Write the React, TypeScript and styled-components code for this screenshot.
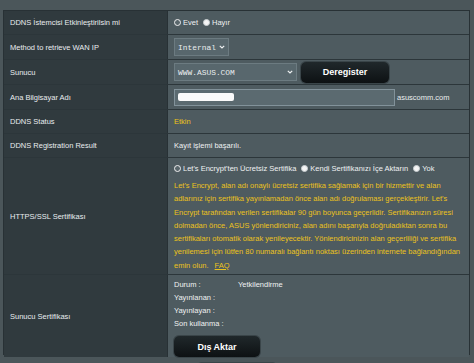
import React from "react";
import styled, { createGlobalStyle } from "styled-components";

const GlobalStyle = createGlobalStyle`
  html, body {
    margin: 0;
    padding: 0;
    overflow: hidden;
    background: #4b565a;
  }
  body {
    font-family: "Liberation Sans", Arial, sans-serif;
  }
`;

const Page = styled.div`
  padding: 10px 0 0 3px;
  width: 474px;
  height: 363px;
  box-sizing: border-box;
  overflow: hidden;
`;

const FormTable = styled.div`
  width: 467px;
  border: 1px solid #283135;
  box-sizing: border-box;
`;

const Row = styled.div<{ $h: number; $last?: boolean }>`
  display: grid;
  grid-template-columns: 164px 1fr;
  height: ${(p) => p.$h}px;
  box-sizing: border-box;
  border-bottom: ${(p) => (p.$last ? "none" : "1px solid #2c363a")};
`;

const Label = styled.div`
  background: #303a3e;
  border-right: 1px solid #283135;
  color: #e8ecee;
  font-size: 7.5px;
  display: flex;
  align-items: center;
  padding-left: 6px;
`;

const Value = styled.div<{ $top?: boolean }>`
  background: #4e5b60;
  color: #eef1f2;
  font-size: 7.5px;
  display: flex;
  flex-direction: ${(p) => (p.$top ? "column" : "row")};
  align-items: ${(p) => (p.$top ? "flex-start" : "center")};
  padding: ${(p) => (p.$top ? "4px 6px 0 6px" : "0 6px")};
  gap: 4px;
`;

const RadioGroup = styled.div`
  display: flex;
  align-items: center;
  gap: 5px;
  height: 13px;
`;

const RadioItem = styled.label`
  display: flex;
  align-items: center;
  gap: 2px;
  color: #eef1f2;
  font-size: 7.5px;
`;

const RadioDot = styled.span<{ $checked?: boolean }>`
  display: inline-block;
  width: 7px;
  height: 7px;
  border-radius: 50%;
  box-sizing: border-box;
  background: ${(p) => (p.$checked ? "#59666b" : "#f4f4f4")};
  border: ${(p) => (p.$checked ? "1.5px solid #f0f0f0" : "1px solid #c9cfd1")};
`;

const SelectBox = styled.div<{ $w: number }>`
  width: ${(p) => p.$w}px;
  height: 18px;
  box-sizing: border-box;
  background: #58676d;
  border: 1px solid #6c7b81;
  display: flex;
  align-items: center;
  gap: 2px;
  padding: 0 3px;
  font-family: "Liberation Mono", "Courier New", monospace;
  font-size: 7.9px;
  color: #e9edee;
  white-space: nowrap;

  svg {
    margin-left: auto;
    flex-shrink: 0;
  }
`;

const DarkButton = styled.button<{ $w: number }>`
  width: ${(p) => p.$w}px;
  height: 21px;
  border: none;
  border-radius: 5px;
  background: linear-gradient(#20282b, #0d1113);
  box-shadow: 0 0 0 1px #3a4549;
  color: #ffffff;
  font-family: "Liberation Sans", Arial, sans-serif;
  font-weight: bold;
  font-size: 9px;
  padding: 0;
  cursor: pointer;
`;

const TextInput = styled.div`
  width: 221px;
  height: 17px;
  box-sizing: border-box;
  background: #5b6a70;
  border: 1px solid #82929a;
  display: flex;
  align-items: center;
  padding-left: 3px;
`;

const Redacted = styled.span`
  display: inline-block;
  width: 56px;
  height: 8px;
  background: #fafafa;
  border-radius: 2px;
`;

const Suffix = styled.span`
  color: #e9edee;
  font-size: 7.5px;
  margin-left: -2px;
`;

const Yellow = styled.span`
  color: #efc31a;
`;

const Notice = styled.p`
  margin: 0;
  color: #ecc21c;
  font-size: 7.5px;
  line-height: 13.3px;
  white-space: nowrap;
`;

const FaqLink = styled.a`
  color: #ecc21c;
  text-decoration: underline;
  margin-left: 6px;
`;

const CertList = styled.div`
  display: grid;
  grid-template-columns: 64px 1fr;
  line-height: 13px;
  font-size: 7.5px;
  color: #eef1f2;
  margin-top: -1px;
`;

const ExportButton = styled(DarkButton)`
  margin-top: 2px;
`;

const Footer = styled.div`
  display: flex;
  justify-content: center;
  width: 467px;
  margin-top: 8px;
`;

const Chevron = () => (
  <svg width="6" height="4" viewBox="0 0 6 4">
    <path d="M0.8 0.8 L3 3 L5.2 0.8" fill="none" stroke="#eef1f2" strokeWidth="1.2" />
  </svg>
);

const Radio = ({ checked, children }: { checked?: boolean; children: React.ReactNode }) => (
  <RadioItem>
    <RadioDot $checked={checked} />
    {children}
  </RadioItem>
);

export default function App() {
  return (
    <>
      <GlobalStyle />
      <Page>
        <FormTable>
          <Row $h={24}>
            <Label>DDNS İstemcisi Etkinleştirilsin mi</Label>
            <Value>
              <RadioGroup>
                <Radio checked>Evet</Radio>
                <Radio>Hayır</Radio>
              </RadioGroup>
            </Value>
          </Row>
          <Row $h={25}>
            <Label>Method to retrieve WAN IP</Label>
            <Value>
              <SelectBox $w={55}>
                Internal
                <Chevron />
              </SelectBox>
            </Value>
          </Row>
          <Row $h={25}>
            <Label>Sunucu</Label>
            <Value>
              <SelectBox $w={123}>
                WWW.ASUS.COM
                <Chevron />
              </SelectBox>
              <DarkButton $w={88}>Deregister</DarkButton>
            </Value>
          </Row>
          <Row $h={25}>
            <Label>Ana Bilgisayar Adı</Label>
            <Value>
              <TextInput>
                <Redacted />
              </TextInput>
              <Suffix>asuscomm.com</Suffix>
            </Value>
          </Row>
          <Row $h={24}>
            <Label>DDNS Status</Label>
            <Value>
              <Yellow>Etkin</Yellow>
            </Value>
          </Row>
          <Row $h={24}>
            <Label>DDNS Registration Result</Label>
            <Value>Kayıt işlemi başarılı.</Value>
          </Row>
          <Row $h={117}>
            <Label>HTTPS/SSL Sertifikası</Label>
            <Value $top>
              <RadioGroup>
                <Radio checked>Let's Encrypt'ten Ücretsiz Sertifika</Radio>
                <Radio>Kendi Sertifikanızı İçe Aktarın</Radio>
                <Radio>Yok</Radio>
              </RadioGroup>
              <Notice>
                Let's Encrypt, alan adı onaylı ücretsiz sertifika sağlamak için bir hizmettir ve alan
                <br />
                adlarınız için sertifika yayınlamadan önce alan adı doğrulaması gerçekleştirir. Let's
                <br />
                Encrypt tarafından verilen sertifikalar 90 gün boyunca geçerlidir. Sertifikanızın süresi
                <br />
                dolmadan önce, ASUS yönlendiriciniz, alan adını başarıyla doğruladıktan sonra bu
                <br />
                sertifikaları otomatik olarak yenileyecektir. Yönlendiricinizin alan geçerliliği ve sertifika
                <br />
                yenilemesi için lütfen 80 numaralı bağlantı noktası üzerinden internete bağlandığından
                <br />
                emin olun.
                <FaqLink>FAQ</FaqLink>
              </Notice>
            </Value>
          </Row>
          <Row $h={79} $last>
            <Label>Sunucu Sertifikası</Label>
            <Value $top>
              <CertList>
                <span>Durum :</span>
                <span>Yetkilendirme</span>
                <span>Yayınlanan :</span>
                <span />
                <span>Yayınlayan :</span>
                <span />
                <span>Son kullanma :</span>
                <span />
              </CertList>
              <ExportButton $w={86}>Dış Aktar</ExportButton>
            </Value>
          </Row>
        </FormTable>
        <Footer>
          <DarkButton $w={80} aria-label="Uygula" />
        </Footer>
      </Page>
    </>
  );
}
